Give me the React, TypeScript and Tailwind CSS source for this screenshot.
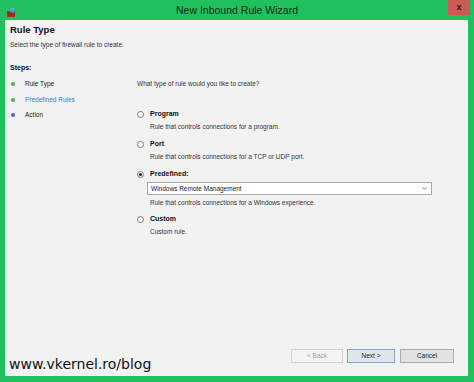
import { ChevronDown } from "lucide-react";

const options = [
  { label: "Program", desc: "Rule that controls connections for a program.", checked: false, gap: "" },
  { label: "Port", desc: "Rule that controls connections for a TCP or UDP port.", checked: false, gap: "mt-[7.5px]" },
  { label: "Predefined:", desc: "Rule that controls connections for a Windows experience.", checked: true, gap: "mt-[7.5px]" },
  { label: "Custom", desc: "Custom rule.", checked: false, gap: "mt-[6px]" },
];

const steps = [
  { name: "Rule Type", dot: "bg-[#4fae4f]", text: "text-[#222]" },
  { name: "Predefined Rules", dot: "bg-[#4fae4f]", text: "text-[#2f7fd0]" },
  { name: "Action", dot: "bg-[#5b5bd6]", text: "text-[#222]" },
];

function Radio({ checked }: { checked: boolean }) {
  return (
    <span className="w-[7px] h-[7px] rounded-full border border-[#777] bg-white flex items-center justify-center shrink-0">
      {checked && <span className="w-[3px] h-[3px] rounded-full bg-[#222]" />}
    </span>
  );
}

function FirewallIcon() {
  return (
    <svg width="9" height="10" viewBox="0 0 9 10">
      <rect x="0" y="4" width="8" height="6" fill="#b8322f" />
      <path d="M0 6h8M0 8h8M3 4v2M6 4v2M1.5 6v2M4.5 6v2M3 8v2M6 8v2" stroke="#7a1c1a" strokeWidth="0.6" />
      <circle cx="5.5" cy="3" r="2.6" fill="#3aa7c9" />
      <path d="M4 2.5c1-1 2.2-0.8 3 0" stroke="#9fe0ee" strokeWidth="0.7" fill="none" />
    </svg>
  );
}

export default function App() {
  return (
    <div className="w-[474px] h-[382px] bg-[#20c05c] flex flex-col relative font-['Liberation_Sans',Arial,sans-serif] overflow-hidden">
      {/* title bar */}
      <div className="h-[20px] shrink-0 flex items-center relative">
        <div className="pl-[7px] pt-[3px]">
          <FirewallIcon />
        </div>
        <div className="absolute inset-x-0 top-[1px] h-[20px] flex items-center justify-center text-[10.5px] text-[#0f2a17]">
          New Inbound Rule Wizard
        </div>
        <div className="absolute right-[4px] top-0 w-[22px] h-[15px] bg-[#cd5a55] flex items-center justify-center text-[9px] font-bold text-[#222] leading-none">
          x
        </div>
      </div>

      {/* client area */}
      <div className="flex-1 ml-[5px] mr-[6px] mb-[6px] bg-[#f2f2f2] border-r border-[#fbfbfb] flex flex-col">
        <div className="pl-[5px] pt-[4px]">
          <div className="text-[9.5px] font-bold leading-[12px] text-[#111]">Rule Type</div>
          <div className="mt-[5px] text-[6.5px] leading-[8px] text-[#333]">
            Select the type of firewall rule to create.
          </div>
        </div>

        <div className="flex flex-1">
          <div className="w-[132px] pl-[5px] pt-[14px]">
            <div className="text-[7px] font-bold leading-[10px] text-[#111]">Steps:</div>
            <div className="mt-[3.5px]">
              {steps.map((s) => (
                <div key={s.name} className="h-[15.5px] flex items-center">
                  <span className={`w-[4px] h-[4px] rounded-full ${s.dot} ml-[1px] mr-[10px]`} />
                  <span className={`text-[6.5px] ${s.text}`}>{s.name}</span>
                </div>
              ))}
            </div>
          </div>

          <div className="flex-1 pt-[30px] text-[6.5px] text-[#333]">
            <div className="leading-[10px]">What type of rule would you like to create?</div>

            <div className="mt-[20px] flex flex-col">
              {options.map((o) => (
                <div key={o.label} className={o.gap}>
                  <div className="flex items-center h-[10px] gap-[6px]">
                    <Radio checked={o.checked} />
                    <span className="font-bold text-[7px] text-[#111]">{o.label}</span>
                  </div>
                  {o.checked && (
                    <div className="ml-[10px] mt-[3px] w-[285px] h-[13px] bg-white border border-[#a9a9a9] flex items-center justify-between pl-[3px] pr-[3px] text-[#222]">
                      <span>Windows Remote Management</span>
                      <ChevronDown size={7} strokeWidth={2.5} className="text-[#444]" />
                    </div>
                  )}
                  <div className={`ml-[13px] leading-[10px] ${o.checked ? "mt-[3px]" : "mt-[2.5px]"}`}>
                    {o.desc}
                  </div>
                </div>
              ))}
            </div>
          </div>
        </div>

        <div className="flex justify-end gap-[4px] pr-[13px] pb-[13px] text-[6.5px]">
          <div className="w-[52px] h-[14px] border border-[#d0d0d0] bg-[#f4f4f4] text-[#a0a0a0] flex items-center justify-center">
            &lt; Back
          </div>
          <div className="w-[48px] h-[14px] border border-[#7fa6cf] bg-[#dfe6ee] text-[#222] flex items-center justify-center">
            Next &gt;
          </div>
          <div className="w-[54px] h-[14px] border border-[#adadad] bg-[#e2e2e2] text-[#222] flex items-center justify-center ml-[1px]">
            Cancel
          </div>
        </div>
      </div>

      <div className="absolute left-[9px] top-[356px] leading-[16px] text-[14px] text-[#111] font-['DejaVu_Sans',sans-serif]">
        www.vkernel.ro/blog
      </div>
    </div>
  );
}
